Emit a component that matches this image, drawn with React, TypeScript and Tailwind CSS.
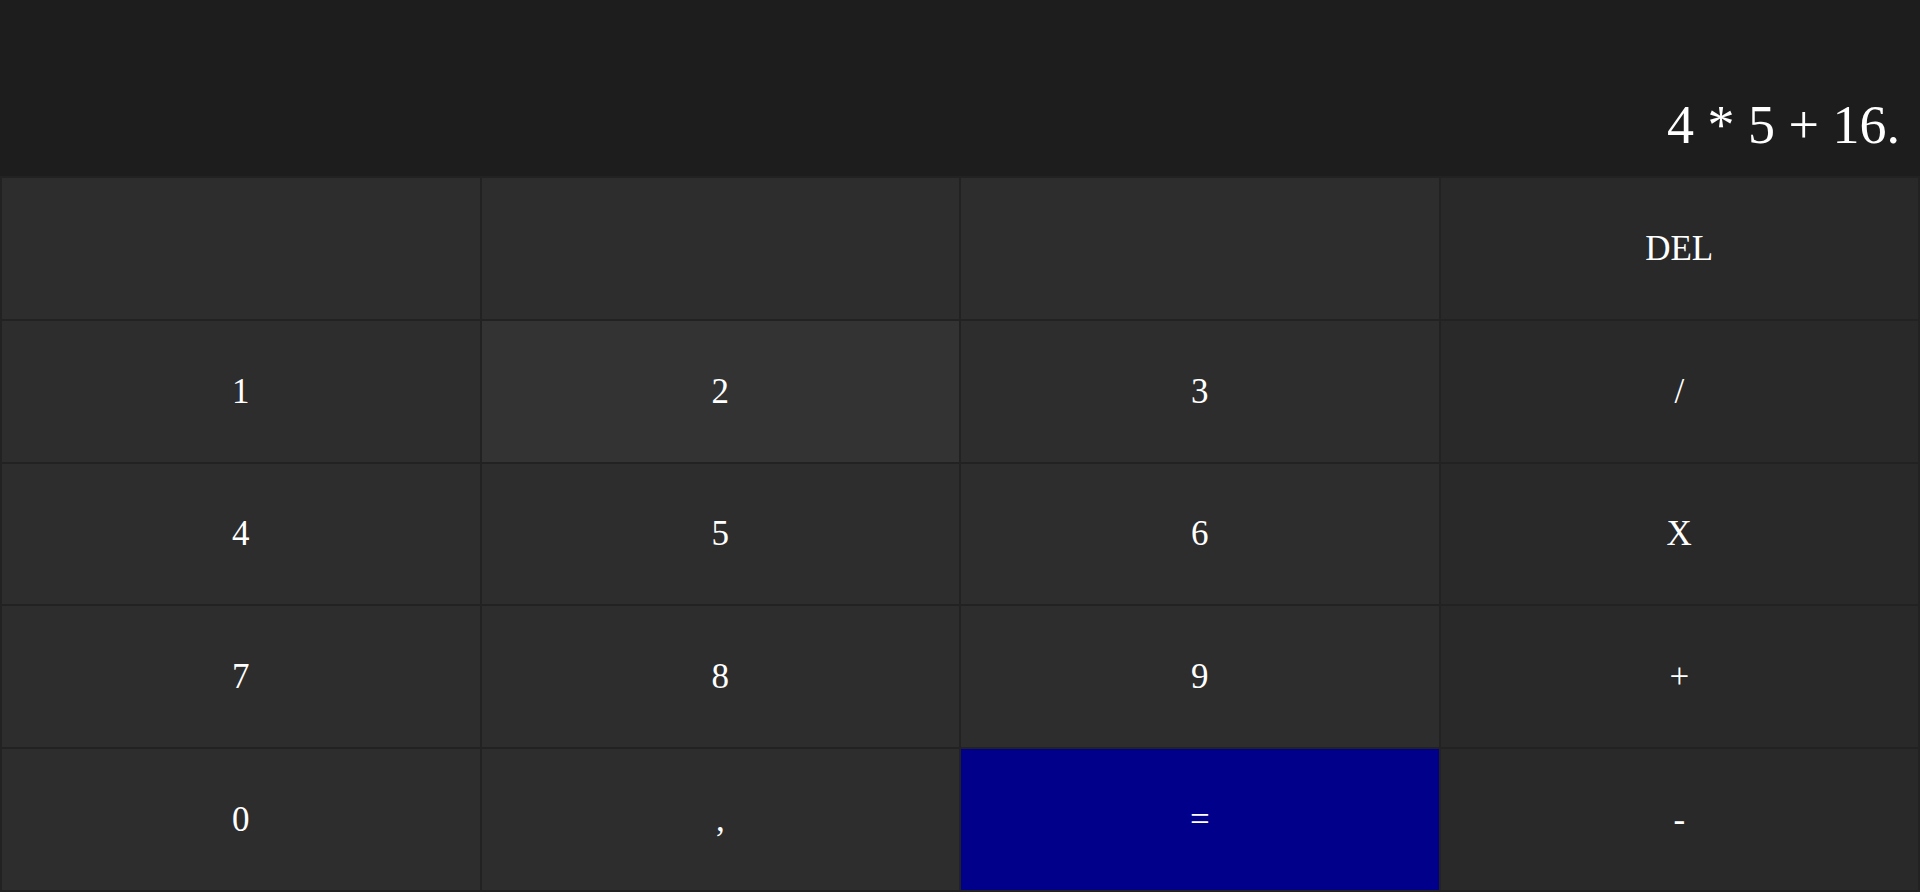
import React from "react";

type Key = { label: string; cls: string };

const base =
  "flex items-center justify-center border border-[#222222] text-white text-[35px] leading-none";

const num = `${base} bg-[#2d2d2d]`;
const op = `${base} bg-[#292929]`;

const keys: Key[] = [
  { label: "", cls: num },
  { label: "", cls: num },
  { label: "", cls: num },
  { label: "DEL", cls: op },
  { label: "1", cls: num },
  { label: "2", cls: `${base} bg-[#333333]` },
  { label: "3", cls: num },
  { label: "/", cls: op },
  { label: "4", cls: num },
  { label: "5", cls: num },
  { label: "6", cls: num },
  { label: "X", cls: op },
  { label: "7", cls: num },
  { label: "8", cls: num },
  { label: "9", cls: num },
  { label: "+", cls: op },
  { label: "0", cls: num },
  { label: ",", cls: num },
  { label: "=", cls: `${base} bg-[#00008b]` },
  { label: "-", cls: op },
];

export default function App() {
  return (
    <div
      className="flex h-screen w-full flex-col overflow-hidden bg-[#1d1d1d]"
      style={{ fontFamily: '"Liberation Serif", "Times New Roman", serif' }}
    >
      <div className="flex h-[176px] shrink-0 items-end justify-end bg-[#1d1d1d] pb-[20px] pr-[20px]">
        <span className="text-[54px] leading-[1.15] text-white">4 * 5 + 16.</span>
      </div>
      <div className="grid flex-1 grid-cols-4 grid-rows-5 border border-[#222222] bg-[#222222]">
        {keys.map((k, i) => (
          <button key={i} className={k.cls} style={{ fontFamily: '"Liberation Serif", "Times New Roman", serif' }}>
            {k.label}
          </button>
        ))}
      </div>
    </div>
  );
}
